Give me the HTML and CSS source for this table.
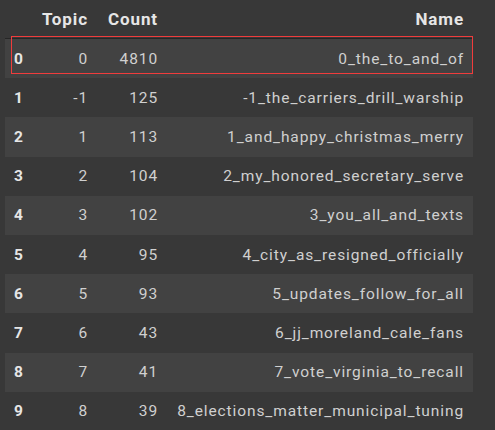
FILE: index.html
```html
<!DOCTYPE html>
<html>
<head>
<meta charset="utf-8">
<link rel="stylesheet" href="styles.css">
</head>
<body>
<div class="frame">
  <div class="row head">
    <div class="c idx"></div>
    <div class="c num">Topic</div>
    <div class="c num">Count</div>
    <div class="c name">Name</div>
  </div>
  <div class="row alt"><div class="c idx">0</div><div class="c num">0</div><div class="c num">4810</div><div class="c name">0_the_to_and_of</div></div>
  <div class="row"><div class="c idx">1</div><div class="c num">-1</div><div class="c num">125</div><div class="c name">-1_the_carriers_drill_warship</div></div>
  <div class="row alt"><div class="c idx">2</div><div class="c num">1</div><div class="c num">113</div><div class="c name">1_and_happy_christmas_merry</div></div>
  <div class="row"><div class="c idx">3</div><div class="c num">2</div><div class="c num">104</div><div class="c name">2_my_honored_secretary_serve</div></div>
  <div class="row alt"><div class="c idx">4</div><div class="c num">3</div><div class="c num">102</div><div class="c name">3_you_all_and_texts</div></div>
  <div class="row"><div class="c idx">5</div><div class="c num">4</div><div class="c num">95</div><div class="c name">4_city_as_resigned_officially</div></div>
  <div class="row alt"><div class="c idx">6</div><div class="c num">5</div><div class="c num">93</div><div class="c name">5_updates_follow_for_all</div></div>
  <div class="row"><div class="c idx">7</div><div class="c num">6</div><div class="c num">43</div><div class="c name">6_jj_moreland_cale_fans</div></div>
  <div class="row alt"><div class="c idx">8</div><div class="c num">7</div><div class="c num">41</div><div class="c name">7_vote_virginia_to_recall</div></div>
  <div class="row"><div class="c idx">9</div><div class="c num">8</div><div class="c num">39</div><div class="c name">8_elections_matter_municipal_tuning</div></div>
  <div class="mark"></div>
</div>
</body>
</html>
```
FILE: styles.css
```css
html, body {
  margin: 0;
  background: #383838;
}
body {
  padding-left: 5px;
  font-family: Roboto, "Noto Sans", sans-serif;
  font-size: 15.5px;
  letter-spacing: 0.9px;
  color: #d0d0d0;
}
.frame {
  position: relative;
  width: 468px;
}
.row {
  display: grid;
  grid-template-columns: 35px 56px 70px 1fr;
  height: 39.2px;
  align-items: center;
}
.row.head {
  height: 38px;
  border-bottom: 1px solid #262626;
  font-weight: 700;
  font-size: 17px;
  color: #e6e6e6;
}
.row.alt {
  background: #424242;
}
.c {
  padding-right: 8px;
  white-space: nowrap;
}
.idx {
  padding-left: 9px;
  font-weight: 700;
  color: #e6e6e6;
}
.num, .name {
  text-align: right;
}
.name {
  padding-right: 9px;
}
.mark {
  position: absolute;
  left: 6px;
  top: 36px;
  width: 460px;
  height: 36px;
  border: 1.5px solid #f03c3c;
}
```
